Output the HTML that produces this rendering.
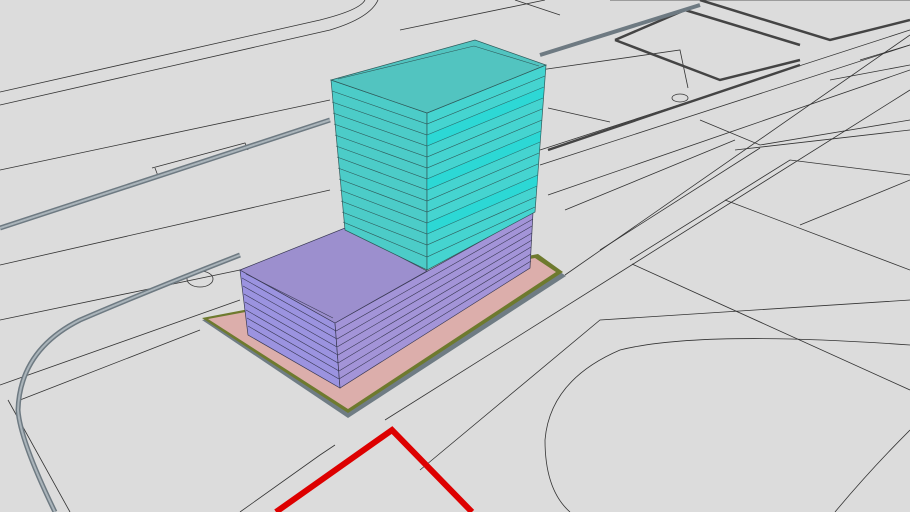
<!DOCTYPE html>
<html><head><meta charset="utf-8"><style>html,body{margin:0;padding:0;background:#dcdcdc;overflow:hidden}svg{display:block}</style></head><body>
<svg width="910" height="512" viewBox="0 0 910 512" xmlns="http://www.w3.org/2000/svg">
<rect width="910" height="512" fill="#dcdcdc"/>
<g fill="none" stroke="#333" stroke-width="0.8">
<path d="M0 105 L330 30 Q370 18 378 0"/>
<path d="M0 92 L320 20 Q360 10 365 0"/>
<path d="M400 30 L545 0"/>
<path d="M515 0 L560 15"/>
<path d="M0 170 L330 100"/>
<path d="M152 168 L245 143 L248 150"/>
<path d="M155 168 L158 176"/>
<path d="M0 265 L330 190"/>
<path d="M540 70 L680 50 L688 88"/>
<path d="M548 108 L610 122"/>
<path d="M0 320 L240 270"/>
<path d="M0 385 L240 300"/>
<path d="M20 400 L200 330"/>
<path d="M8 400 L70 512"/>
<path d="M540 150 L910 30"/>
<path d="M540 165 L910 45"/>
<path d="M548 195 L910 70"/>
<path d="M565 210 L735 140"/>
<path d="M700 120 L760 145 L910 120"/>
<path d="M735 150 L910 130"/>
<path d="M600 250 L760 148"/>
<path d="M630 260 L790 160 L910 175"/>
<path d="M800 225 L910 180"/>
<path d="M725 200 L910 270"/>
<path d="M632 264 L910 390"/>
<path d="M565 275 L910 35"/>
<path d="M385 420 L910 90"/>
<path d="M240 512 L320 455 L335 445"/>
<path d="M420 470 L600 320 L910 300"/>
<path d="M910 345 Q700 330 620 350 Q550 380 545 440 Q545 490 570 512"/>
<path d="M835 512 Q870 470 910 430"/>
<path d="M860 60 L910 45"/>
<path d="M610 0 L910 0"/>
<path d="M830 80 L910 65"/>
<ellipse cx="200" cy="279" rx="13" ry="8"/>
<ellipse cx="680" cy="98" rx="8" ry="4"/>
</g>
<g fill="none" stroke="#444" stroke-width="2.5">
<path d="M615 40 L720 80 L800 60"/>
<path d="M615 40 L685 10 L800 45"/>
<path d="M700 0 L830 40 L910 20"/>
<path d="M548 150 L660 112 L800 65"/>
</g>
<path d="M0 228 L330 120" stroke="#6e7a82" stroke-width="5" fill="none"/>
<path d="M0 228 L330 120" stroke="#aab4ba" stroke-width="2" fill="none"/>
<path d="M540 55 L700 5" stroke="#6e7a82" stroke-width="4" fill="none"/>
<path d="M240 255 Q150 290 80 320 Q20 350 18 410 Q20 440 55 512" stroke="#6e7a82" stroke-width="5" fill="none"/>
<path d="M240 255 Q150 290 80 320 Q20 350 18 410 Q20 440 55 512" stroke="#aab4ba" stroke-width="2" fill="none"/>
<!-- site -->
<polygon points="202,320 348,418 566,276 540,258" fill="#6f7c84"/>
<polygon points="202,318 348,413 563,272 538,254" fill="#6e7a2e"/>
<polygon points="208,319 348,409 556,272 535,258" fill="#dcaeab"/>
<!-- red -->
<path d="M276 512 L392 430 L472 512" fill="none" stroke="#dd0000" stroke-width="6"/>
<!-- podium -->
<g stroke="#3a3a55" stroke-width="0.7">
<polygon points="240,270 335,323 340,388 248,335" fill="#9b93e0"/>
<polygon points="335,323 533,212 530,268 340,388" fill="#a394d8"/>
<polygon points="240,270 345,228 427,271 335,323" fill="#9c8fce"/>
</g>
<g stroke="#3a3a55" stroke-width="0.6" fill="none">
<path d="M242 278 L336 331 L533 219"/><path d="M243 286 L337 339 L532 226"/>
<path d="M244 294 L337 347 L532 233"/><path d="M245 302 L338 355 L532 240"/>
<path d="M246 310 L338 363 L531 247"/><path d="M247 318 L339 371 L531 254"/>
<path d="M248 326 L339 379 L531 261"/>
<path d="M246 274 L333 318"/>
</g>
<!-- tower -->
<g stroke="#2f5a5a" stroke-width="0.7">
<polygon points="331,80 427,113 427,270 345,230" fill="#4cccc8"/>
<polygon points="427,113 546,65 535,212 427,270" fill="#45d4d0"/>
<polygon points="331,80 475,40 546,65 427,113" fill="#52c4c0"/>
</g>
<g stroke="#2f5a5a" stroke-width="0.6" fill="none">
<path d="M338 79 L474 46 L539 66"/>
<path d="M332 91 L427 124 L545 76"/><path d="M332 102 L427 135 L544 87"/>
<path d="M333 113 L427 146 L543 98"/><path d="M334 124 L427 157 L542 109"/>
<path d="M335 135 L427 168 L542 120"/><path d="M336 146 L427 179 L541 131"/>
<path d="M337 157 L427 190 L540 142"/><path d="M338 168 L427 201 L539 153"/>
<path d="M339 179 L427 212 L538 164"/><path d="M340 190 L427 223 L538 175"/>
<path d="M341 201 L427 234 L537 186"/><path d="M342 212 L427 245 L536 197"/>
<path d="M343 222 L427 257 L535 207"/>
</g>
<g fill="#00e0e0" opacity="0.35">
<polygon points="427,135 544,87 543,98 427,146"/>
<polygon points="427,179 541,131 540,142 427,190"/>
<polygon points="427,223 538,175 537,186 427,234"/>
</g>
</svg>
</body></html>
